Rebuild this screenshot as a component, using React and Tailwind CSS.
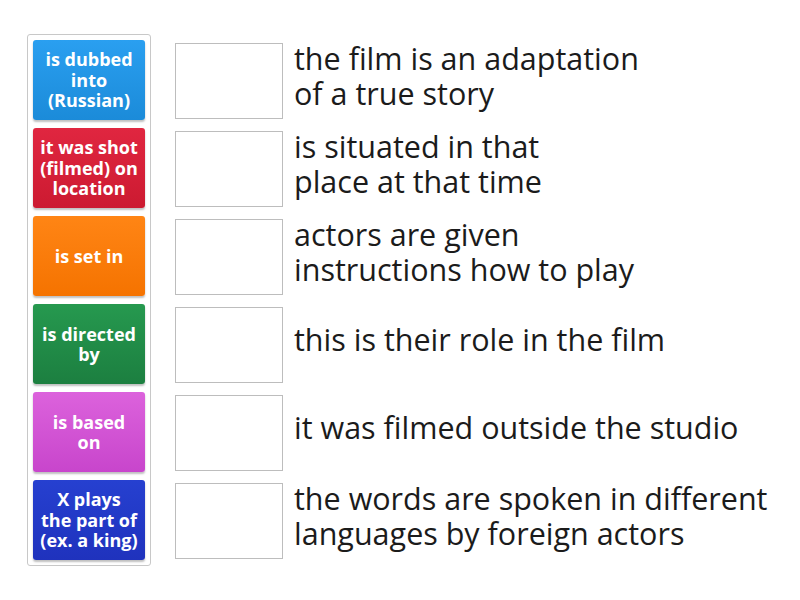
import React from 'react';

const tiles = [
  { lines: ['is dubbed', 'into', '(Russian)'], cls: 'bg-gradient-to-b from-[#2a9ff0] to-[#1b8bd9]' },
  { lines: ['it was shot', '(filmed) on', 'location'], cls: 'bg-gradient-to-b from-[#e02640] to-[#cc1a31]' },
  { lines: ['is set in'], cls: 'bg-gradient-to-b from-[#ff8514] to-[#f57300]' },
  { lines: ['is directed', 'by'], cls: 'bg-gradient-to-b from-[#26994f] to-[#1c7f40]' },
  { lines: ['is based', 'on'], cls: 'bg-gradient-to-b from-[#dc62dc] to-[#c845cc]' },
  { lines: ['X plays', 'the part of', '(ex. a king)'], cls: 'bg-gradient-to-b from-[#2640d0] to-[#1f32bd]' },
];

const answers = [
  ['the film is an adaptation', 'of a true story'],
  ['is situated in that', 'place at that time'],
  ['actors are given', 'instructions how to play'],
  ['this is their role in the film'],
  ['it was filmed outside the studio'],
  ['the words are spoken in different', 'languages by foreign actors'],
];

function Lines({ lines }) {
  return lines.map((l, i) => (
    <React.Fragment key={l}>
      {i > 0 && <br />}
      {l}
    </React.Fragment>
  ));
}

export default function App() {
  return (
    <div className="w-[800px] h-[600px] bg-white flex items-start pl-[27px] pt-[34px] font-['Open_Sans',sans-serif]">
      <div className="w-[124px] border border-[#c8c8c8] rounded-[3px] px-[5px] pt-[5px] pb-[5px] flex flex-col gap-[8px]">
        {tiles.map((t) => (
          <div
            key={t.lines.join(' ')}
            className={`${t.cls} h-[80px] rounded-[3px] shadow-[0_2px_2px_rgba(0,0,0,0.25)] flex items-center justify-center text-center text-white font-bold text-[18px] leading-[20.5px] whitespace-nowrap`}
          >
            <div>
              <Lines lines={t.lines} />
            </div>
          </div>
        ))}
      </div>
      <div className="ml-[24px] mt-[9px] flex flex-col gap-[12px]">
        {answers.map((a) => (
          <div key={a.join(' ')} className="flex items-center gap-[11px]">
            <div className="w-[108px] h-[76px] shrink-0 border border-[#bdbdbd] bg-white" />
            <div className="text-[30.5px] leading-[35px] text-[#1b1b1b] -mt-[11px] whitespace-nowrap">
              <Lines lines={a} />
            </div>
          </div>
        ))}
      </div>
    </div>
  );
}
